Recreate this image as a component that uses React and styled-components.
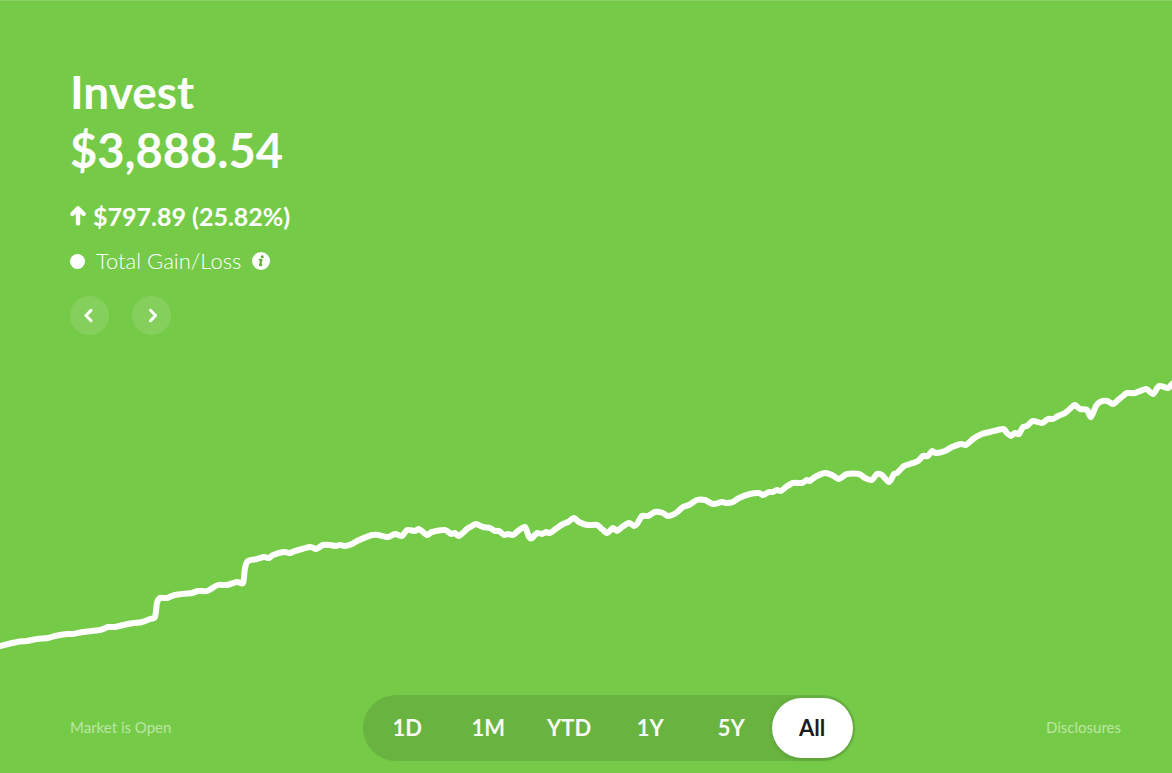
import React, { useState } from "react";
import styled, { createGlobalStyle } from "styled-components";

const GlobalStyle = createGlobalStyle`
  *, *::before, *::after { box-sizing: border-box; }
  body {
    margin: 0;
    background: #75cb48;
    color: #fff;
    font-family: Lato, "Liberation Sans", sans-serif;
  }
  button { font: inherit; color: inherit; border: 0; padding: 0; cursor: pointer; }
`;

const Page = styled.main`
  min-height: 100vh;
  display: flex;
  flex-direction: column;
  border-top: 1px solid #8bd166;
`;

const Summary = styled.header`
  padding: 63px 70px 0;
`;

const Title = styled.h1`
  margin: 0;
  font-size: 46px;
  line-height: 56px;
  font-weight: 700;
`;

const Balance = styled.p`
  margin: 0;
  font-size: 47px;
  line-height: 60px;
  font-weight: 700;
`;

const Change = styled.p`
  display: flex;
  align-items: center;
  gap: 7px;
  margin: 20px 0 0;
  font-size: 25px;
  line-height: 32px;
  font-weight: 700;
`;

const Legend = styled.div`
  display: flex;
  align-items: center;
  gap: 11px;
  margin-top: 13px;
  font-size: 22px;
  line-height: 32px;
  font-weight: 300;
`;

const Dot = styled.span`
  width: 15px;
  height: 15px;
  border-radius: 50%;
  background: #fff;
`;

const InfoButton = styled.button`
  display: flex;
  background: none;
`;

const Pager = styled.nav`
  display: flex;
  gap: 23px;
  margin-top: 19px;
`;

const PagerButton = styled.button`
  display: flex;
  align-items: center;
  justify-content: center;
  width: 39px;
  height: 39px;
  border-radius: 50%;
  background: #85d05c;
`;

const Chart = styled.svg`
  display: block;
  width: 100%;
  flex: 1 0 290px;
  min-height: 0;
  margin: 35px 0;
`;

const Footer = styled.footer`
  display: flex;
  align-items: center;
  justify-content: space-between;
  padding: 0 51px 12px 70px;
  font-size: 15px;
  color: #bce6a3;
`;

const Note = styled.span`
  padding-bottom: 3px;
`;

const FooterLink = styled.a`
  padding-bottom: 3px;
  color: inherit;
  text-decoration: none;
`;

const Ranges = styled.div`
  display: flex;
  padding: 3px 2px 3px 4px;
  border-radius: 33px;
  background: #69b341;
`;

const RangeButton = styled.button`
  width: 81px;
  height: 60px;
  padding-bottom: 2px;
  border-radius: 30px;
  font-size: 22px;
  font-weight: 700;
  background: ${(p) => (p.$active ? "#fff" : "transparent")};
  color: ${(p) => (p.$active ? "#1c1c1e" : "#f6fcf2")};
  box-shadow: ${(p) => (p.$active ? "0 1px 4px rgba(0, 0, 0, 0.16)" : "none")};
`;

const points = [
  [-4, 647], [0, 646], [17, 642], [27, 641], [37, 639], [48, 638], [55, 636], [67, 634], [73, 634],
  [83, 632], [100, 630], [108, 627], [115, 627], [128, 624], [142, 622], [150, 619], [155, 617],
  [157, 603], [160, 598], [167, 598], [175, 595], [192, 593], [198, 591], [207, 591], [218, 585],
  [227, 585], [237, 582], [243, 583], [245, 568], [248, 561], [257, 559], [264, 557], [269, 558],
  [273, 555], [284, 552], [290, 553], [295, 551], [310, 547], [316, 549], [323, 545], [330, 545],
  [336, 546], [340, 545], [345, 546], [352, 544], [357, 541], [372, 535], [378, 535], [388, 537],
  [395, 534], [402, 536], [407, 530], [415, 531], [419, 529], [427, 535], [432, 532], [445, 530],
  [451, 534], [455, 533], [459, 536], [467, 529], [472, 526], [476, 524], [483, 527], [490, 528],
  [495, 531], [499, 531], [504, 535], [508, 534], [513, 535], [518, 531], [525, 527], [529, 537],
  [532, 538], [537, 533], [542, 534], [546, 532], [550, 533], [557, 528], [563, 524], [568, 522],
  [574, 518], [579, 522], [587, 525], [597, 525], [602, 529], [607, 533], [613, 528], [617, 531],
  [622, 527], [629, 523], [634, 526], [637, 524], [642, 516], [648, 516], [655, 512], [663, 513],
  [668, 516], [676, 513], [683, 507], [689, 505], [697, 500], [705, 500], [713, 504], [722, 502],
  [726, 503], [733, 502], [739, 498], [750, 494], [759, 493], [763, 495], [769, 492], [773, 492],
  [777, 490], [781, 491], [786, 487], [793, 483], [802, 483], [807, 480], [810, 481], [815, 477],
  [825, 473], [832, 475], [839, 479], [847, 474], [859, 474], [865, 478], [872, 480], [877, 474],
  [882, 475], [889, 482], [894, 474], [897, 473], [904, 466], [910, 464], [918, 461], [923, 456],
  [928, 456], [932, 451], [936, 453], [945, 451], [952, 447], [961, 444], [966, 445], [973, 439],
  [982, 434], [990, 432], [1003, 429], [1007, 433], [1011, 436], [1015, 433], [1019, 434],
  [1023, 427], [1027, 426], [1033, 421], [1042, 423], [1048, 419], [1053, 419], [1058, 416],
  [1065, 413], [1072, 407], [1075, 405], [1080, 409], [1087, 410], [1091, 417], [1096, 406],
  [1100, 402], [1107, 401], [1113, 404], [1118, 400], [1123, 396], [1127, 393], [1135, 393],
  [1146, 389], [1153, 394], [1159, 386], [1168, 388], [1172, 384], [1176, 381],
];

// Smooths the series with cubic segments whose handles follow the neighbouring points.
function linePath(pts) {
  let d = `M${pts[0][0]} ${pts[0][1]}`;
  for (let i = 0; i < pts.length - 1; i += 1) {
    const a = pts[Math.max(i - 1, 0)];
    const b = pts[i];
    const c = pts[i + 1];
    const e = pts[Math.min(i + 2, pts.length - 1)];
    const k = 8;
    d += `C${b[0] + (c[0] - a[0]) / k} ${b[1] + (c[1] - a[1]) / k} ${c[0] - (e[0] - b[0]) / k} ${c[1] - (e[1] - b[1]) / k} ${c[0]} ${c[1]}`;
  }
  return d;
}

const ranges = ["1D", "1M", "YTD", "1Y", "5Y", "All"];

function Chevron({ d }) {
  return (
    <svg width="11" height="15" viewBox="0 0 11 15" fill="none" stroke="#fff" strokeWidth="3" strokeLinecap="round" strokeLinejoin="round" aria-hidden="true">
      <path d={d} />
    </svg>
  );
}

export default function App() {
  const [range, setRange] = useState("All");
  return (
    <Page>
      <GlobalStyle />
      <Summary>
        <Title>Invest</Title>
        <Balance>$3,888.54</Balance>
        <Change>
          <svg width="16" height="22" viewBox="0 0 16 22" fill="none" stroke="#fff" strokeWidth="4.4" strokeLinecap="round" strokeLinejoin="round" aria-hidden="true">
            <path d="M8 18.4V4M2.4 9L8 3.4L13.6 9" />
          </svg>
          <span>$797.89 (25.82%)</span>
        </Change>
        <Legend>
          <Dot />
          <span>Total Gain/Loss</span>
          <InfoButton type="button" aria-label="About total gain/loss">
            <svg width="18" height="18" viewBox="0 0 18 18" aria-hidden="true">
              <circle cx="9" cy="9" r="9" fill="#fff" />
              <circle cx="10.2" cy="4.7" r="1.5" fill="#5fae38" />
              <path d="M7.8 7.8H9.4L8.1 13.2H9.2" fill="none" stroke="#5fae38" strokeWidth="2.2" strokeLinejoin="round" strokeLinecap="round" />
            </svg>
          </InfoButton>
        </Legend>
        <Pager aria-label="Summary metric">
          <PagerButton type="button" aria-label="Previous">
            <Chevron d="M7 2.3L2 7.5L7 12.7" />
          </PagerButton>
          <PagerButton type="button" aria-label="Next">
            <Chevron d="M4.5 2.3L9.5 7.5L4.5 12.7" />
          </PagerButton>
        </Pager>
      </Summary>
      <Chart viewBox="0 370 1172 290" preserveAspectRatio="none" role="img" aria-label="Account value over time">
        <path d={linePath(points)} fill="none" stroke="#fff" strokeWidth="6" strokeLinecap="round" strokeLinejoin="round" vectorEffect="non-scaling-stroke" />
      </Chart>
      <Footer>
        <Note>Market is Open</Note>
        <Ranges role="group" aria-label="Time range">
          {ranges.map((r) => (
            <RangeButton key={r} type="button" $active={r === range} aria-pressed={r === range} onClick={() => setRange(r)}>
              {r}
            </RangeButton>
          ))}
        </Ranges>
        <FooterLink href="#disclosures">Disclosures</FooterLink>
      </Footer>
    </Page>
  );
}
